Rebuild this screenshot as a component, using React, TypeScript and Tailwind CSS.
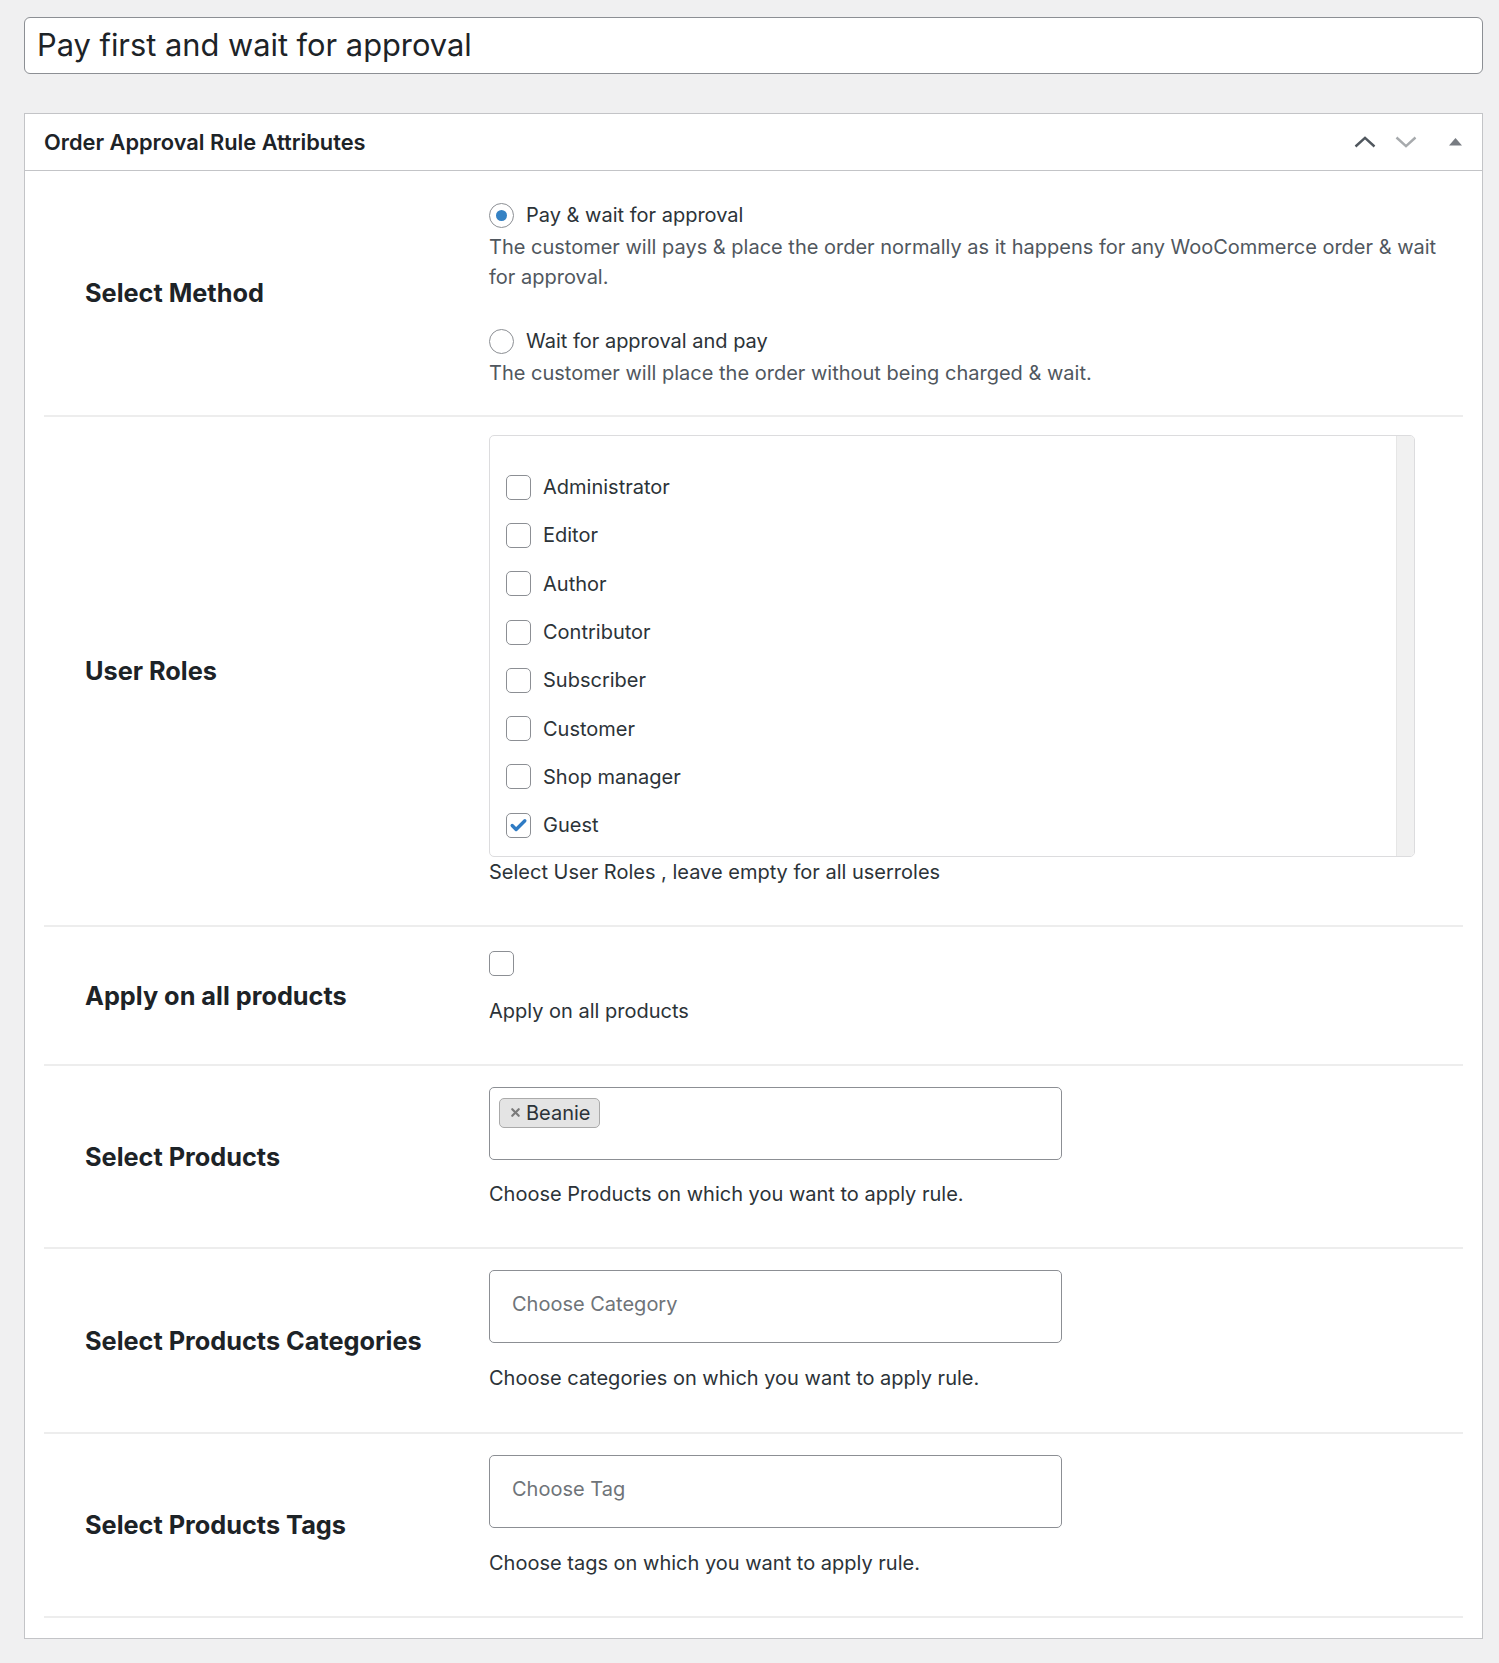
import { Check, X } from "lucide-react"

const ROLES = [
  "Administrator",
  "Editor",
  "Author",
  "Contributor",
  "Subscriber",
  "Customer",
  "Shop manager",
  "Guest",
]

const FONT = { fontFamily: "Inter, 'Noto Sans', 'Liberation Sans', sans-serif" }

function Box({ checked }: { checked?: boolean }) {
  return (
    <span className="flex h-[25px] w-[25px] shrink-0 items-center justify-center rounded-[5px] border border-[#8c8f94] bg-white">
      {checked && <Check className="h-[19px] w-[19px] text-[#2f7bc4]" strokeWidth={4.2} />}
    </span>
  )
}

function Radio({ checked }: { checked?: boolean }) {
  return (
    <span className="flex h-[25px] w-[25px] shrink-0 items-center justify-center rounded-full border border-[#8c8f94] bg-white">
      {checked && <span className="h-[11px] w-[11px] rounded-full bg-[#3582c4]" />}
    </span>
  )
}

// label cell is centred on the whole row, the field cell carries the padding
function Row({
  label,
  children,
  className,
}: {
  label: string
  children: React.ReactNode
  className: string
}) {
  return (
    <div className="flex border-b-2 border-[#ededed]">
      <div className="flex w-[445px] shrink-0 items-center pl-[41px] text-[25.3px] font-bold text-[#1d2327]">
        {label}
      </div>
      <div className={`flex-1 ${className}`}>{children}</div>
    </div>
  )
}

export default function App() {
  return (
    <div className="min-h-screen bg-[#f0f0f1] pt-[17px] pr-[16px] pb-[26px] pl-[24px] text-[20px] text-[#50575e]" style={FONT}>
      {/* Title */}
      <div className="flex h-[57px] items-center rounded-[6px] border border-[#8c8f94] bg-white px-[12px] text-[30.8px] text-[#1d2327]">
        Pay first and wait for approval
      </div>

      {/* Meta box */}
      <div className="mt-[39px] border border-[#c3c4c7] bg-white">
        <div className="flex h-[57px] items-center justify-between border-b border-[#c3c4c7] pl-[19px] pr-[20px]">
          <h2 className="text-[21.8px] font-semibold text-[#1d2327]">Order Approval Rule Attributes</h2>
          <div className="flex items-center">
            <svg width="22" height="12" viewBox="0 0 22 12" className="text-[#50575e]">
              <path d="M1.5 10.5 11 1.8l9.5 8.7" fill="none" stroke="currentColor" strokeWidth="2.4" />
            </svg>
            <svg width="22" height="12" viewBox="0 0 22 12" className="ml-[19px] text-[#a7aaad]">
              <path d="M1.5 1.5 11 10.2l9.5-8.7" fill="none" stroke="currentColor" strokeWidth="2.4" />
            </svg>
            <svg width="13" height="8" viewBox="0 0 13 8" className="ml-[32px] text-[#787c82]">
              <path d="M6.5 0 13 7.5H0z" fill="currentColor" />
            </svg>
          </div>
        </div>

        <div className="px-[19px] pb-[20px]">
          <Row label="Select Method" className="pt-[29px] pb-[27px]">
            <label className="flex h-[30px] items-center gap-[12px] text-[#2c3338]">
              <Radio checked />
              Pay & wait for approval
            </label>
            <p className="mt-[2px] leading-[30px]">
              The customer will pays & place the order normally as it happens for any WooCommerce order & wait for approval.
            </p>
            <label className="mt-[34px] flex h-[30px] items-center gap-[12px] text-[#2c3338]">
              <Radio />
              Wait for approval and pay
            </label>
            <p className="mt-[2px] leading-[30px]">The customer will place the order without being charged & wait.</p>
          </Row>

          <Row label="User Roles" className="pt-[18px] pb-[38px]">
            <div className="flex h-[422px] w-[926px] overflow-hidden rounded-[5px] border border-[#dcdcde]">
              <div className="flex-1 pt-[27px] pl-[16px]">
                {ROLES.map((r) => (
                  <label key={r} className="flex h-[48.3px] items-center gap-[12px] text-[#2c3338]">
                    <Box checked={r === "Guest"} />
                    {r}
                  </label>
                ))}
              </div>
              <div className="w-[18px] border-l border-[#e6e6e6] bg-[#f1f1f1]" />
            </div>
            <p className="leading-[30px] text-[#2c3338]">Select User Roles , leave empty for all userroles</p>
          </Row>

          <Row label="Apply on all products" className="pt-[24px] pb-[38px]">
            <Box />
            <p className="mt-[20px] leading-[30px] text-[#2c3338]">Apply on all products</p>
          </Row>

          <Row label="Select Products" className="pt-[21px] pb-[38px]">
            <div className="h-[73px] w-[573px] rounded-[5px] border border-[#8c8f94] bg-white px-[9px] pt-[9px]">
              <span className="inline-flex h-[30px] items-center gap-[4px] rounded-[5px] border border-[#aaaaaa] bg-[#e4e4e4] pl-[9px] pr-[8px] text-[#2c3338]">
                <X className="h-[13px] w-[13px] text-[#7a7a7a]" strokeWidth={4} />
                Beanie
              </span>
            </div>
            <p className="mt-[19px] leading-[30px] text-[#2c3338]">Choose Products on which you want to apply rule.</p>
          </Row>

          <Row label="Select Products Categories" className="pt-[21px] pb-[39px]">
            <div className="flex h-[73px] w-[573px] items-center rounded-[5px] border border-[#8c8f94] bg-white px-[22px] pb-[6px] text-[#6f7479]">
              Choose Category
            </div>
            <p className="mt-[20px] leading-[30px] text-[#2c3338]">Choose categories on which you want to apply rule.</p>
          </Row>

          <Row label="Select Products Tags" className="pt-[21px] pb-[38px]">
            <div className="flex h-[73px] w-[573px] items-center rounded-[5px] border border-[#8c8f94] bg-white px-[22px] pb-[6px] text-[#6f7479]">
              Choose Tag
            </div>
            <p className="mt-[20px] leading-[30px] text-[#2c3338]">Choose tags on which you want to apply rule.</p>
          </Row>
        </div>
      </div>
    </div>
  )
}
